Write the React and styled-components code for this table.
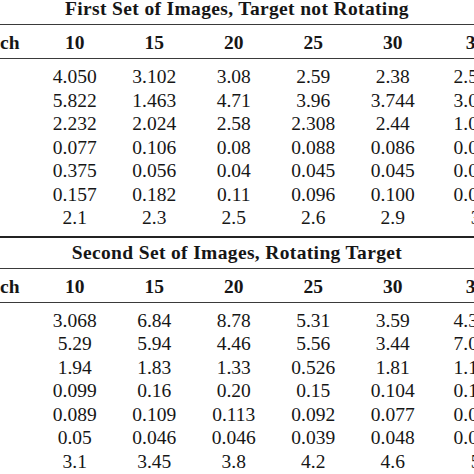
import React from "react";
import styled, { createGlobalStyle } from "styled-components";

const Global = createGlobalStyle`
  html, body {
    margin: 0;
    padding: 0;
    background: #ffffff;
    overflow: hidden;
  }
  body {
    font-family: "Liberation Serif", "Times New Roman", serif;
    color: #161616;
  }
`;

const Page = styled.div`
  width: 474px;
  height: 474px;
  overflow: hidden;
  background: #ffffff;
`;

const Sheet = styled.div`
  margin-top: -6px;
  display: flex;
  flex-direction: column;
`;

const Section = styled.section`
  display: flex;
  flex-direction: column;
  border-bottom: ${(p) => (p.$last ? "none" : "2px solid #232323")};
`;

const Title = styled.div`
  height: 30px;
  line-height: 30px;
  text-align: center;
  font-weight: 700;
  font-size: 19.5px;
  letter-spacing: 0.35px;
  white-space: nowrap;
  border-bottom: 1px solid #3a3a3a;
`;

const Row = styled.div`
  display: grid;
  grid-template-columns: 35px repeat(5, 79.5px) 86px;
  width: max-content;
  font-size: 19.5px;
  white-space: nowrap;
`;

const HeadRow = styled(Row)`
  padding-top: 2px;
  height: 31px;
  line-height: 31px;
  font-weight: 700;
  width: 474px;
  border-bottom: 1px solid #3a3a3a;
`;

const Body = styled.div`
  display: flex;
  flex-direction: column;
  padding: 6px 0;
`;

const BodyRow = styled(Row)`
  height: 23.5px;
  line-height: 23.5px;
`;

const Cell = styled.div`
  text-align: ${(p) => (p.$label ? "right" : "center")};
  padding-right: ${(p) => (p.$label ? "18px" : "0")};
  overflow: visible;
`;

const headers = ["10", "15", "20", "25", "30", "35"];

const sections = [
  {
    title: "First Set of Images, Target not Rotating",
    rows: [
      ["4.050", "3.102", "3.08", "2.59", "2.38", "2.516"],
      ["5.822", "1.463", "4.71", "3.96", "3.744", "3.024"],
      ["2.232", "2.024", "2.58", "2.308", "2.44", "1.062"],
      ["0.077", "0.106", "0.08", "0.088", "0.086", "0.068"],
      ["0.375", "0.056", "0.04", "0.045", "0.045", "0.061"],
      ["0.157", "0.182", "0.11", "0.096", "0.100", "0.064"],
      ["2.1", "2.3", "2.5", "2.6", "2.9", "3"],
    ],
  },
  {
    title: "Second Set of Images, Rotating Target",
    rows: [
      ["3.068", "6.84", "8.78", "5.31", "3.59", "4.312"],
      ["5.29", "5.94", "4.46", "5.56", "3.44", "7.061"],
      ["1.94", "1.83", "1.33", "0.526", "1.81", "1.121"],
      ["0.099", "0.16", "0.20", "0.15", "0.104", "0.121"],
      ["0.089", "0.109", "0.113", "0.092", "0.077", "0.068"],
      ["0.05", "0.046", "0.046", "0.039", "0.048", "0.042"],
      ["3.1", "3.45", "3.8", "4.2", "4.6", "5"],
    ],
  },
];

export default function App() {
  return (
    <Page>
      <Global />
      <Sheet>
        {sections.map((s, si) => (
          <Section key={si} $last={si === sections.length - 1}>
            <Title>{s.title}</Title>
            <HeadRow>
              <Cell $label>ch</Cell>
              {headers.map((h) => (
                <Cell key={h}>{h}</Cell>
              ))}
            </HeadRow>
            <Body>
              {s.rows.map((r, ri) => (
                <BodyRow key={ri}>
                  <Cell $label />
                  {r.map((v, vi) => (
                    <Cell key={vi}>{v}</Cell>
                  ))}
                </BodyRow>
              ))}
            </Body>
          </Section>
        ))}
      </Sheet>
    </Page>
  );
}
